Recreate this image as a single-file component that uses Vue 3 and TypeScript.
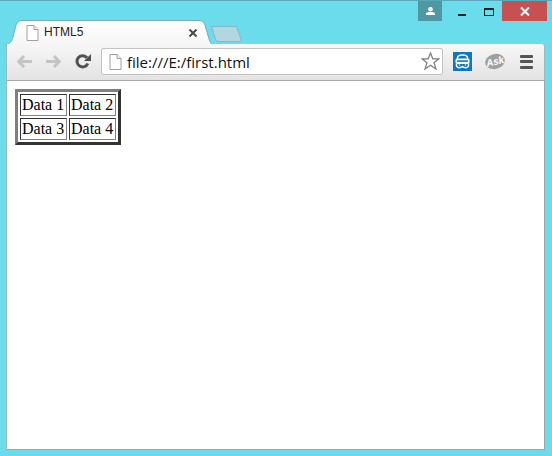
<script setup lang="ts">
const rows: string[][] = [
  ['Data 1', 'Data 2'],
  ['Data 3', 'Data 4'],
]
</script>

<template>
  <div class="window">
    <header class="titlebar">
      <div class="tabstrip">
        <div class="tab">
          <svg class="tab-shape" width="208" height="25" viewBox="0 0 208 25">
            <defs>
              <linearGradient id="tabfill" x1="0" y1="0" x2="0" y2="1">
                <stop offset="0" stop-color="#ffffff" />
                <stop offset="1" stop-color="#f6f6f6" />
              </linearGradient>
            </defs>
            <path d="M0 25 C5 24 7 21 8 17 L11 5 C12 2 14 .5 17 .5 L194 .5 C197 .5 199 2 200 5 L204 19 C205 22 206 24 208 25" fill="url(#tabfill)" stroke="#7fa9b3" stroke-width="1" />
          </svg>
          <svg class="page-icon" width="13" height="16" viewBox="0 0 13 16">
            <path d="M1 .5H8L12 4.500V15.500H1Z" fill="#fff" stroke="#a0a0a0" />
            <path d="M8 .5V4.500H12" fill="#eee" stroke="#a0a0a0" />
          </svg>
          <span class="tab-title">HTML5</span>
          <svg class="tab-close" width="8" height="8" viewBox="0 0 8 8">
            <path d="M.5 .5L7.500 7.500M7.500 .5L.5 7.500" stroke="#4a4a4a" stroke-width="2" />
          </svg>
        </div>
        <svg class="new-tab" width="31" height="16" viewBox="0 0 31 16">
          <path d="M.5 .5H24C25 .5 25.500 1 26 2L30 13C30.500 14.500 29.500 15.500 28 15.500H7C5.500 15.500 5 14.500 4.500 13Z" fill="#b4d6e0" stroke="#86b6c4" />
        </svg>
      </div>
      <div class="controls">
        <div class="profile">
          <svg width="9" height="8" viewBox="0 0 9 8">
            <circle cx="4.500" cy="2.300" r="2.300" fill="#fff" />
            <path d="M0 8V6.500C0 5.500 2 5 4.500 5S9 5.500 9 6.500V8Z" fill="#fff" />
          </svg>
        </div>
        <div class="ctl ctl-min"><span class="min"></span></div>
        <div class="ctl ctl-max"><span class="max"></span></div>
        <div class="close">
          <svg width="10" height="9" viewBox="0 0 10 9">
            <path d="M1 .5L9 8.500M9 .5L1 8.500" stroke="#fff" stroke-width="2" />
          </svg>
        </div>
      </div>
    </header>

    <nav class="toolbar">
      <svg class="nav" width="15" height="13" viewBox="0 0 15 13">
        <path d="M7 1L1.800 6.500L7 12M2 6.500H15" fill="none" stroke="#c4c4c4" stroke-width="3" />
      </svg>
      <svg class="nav nav-fwd" width="15" height="13" viewBox="0 0 15 13">
        <path d="M8 1L13.200 6.500L8 12M13 6.500H0" fill="none" stroke="#c4c4c4" stroke-width="3" />
      </svg>
      <svg class="reload" width="16" height="15" viewBox="0 0 16 15">
        <path d="M12.800 9.500A5.600 5.600 0 1 1 12 3.800" fill="none" stroke="#505050" stroke-width="3" />
        <path d="M9 7H16V0Z" fill="#505050" />
      </svg>
      <div class="omnibox">
        <svg class="omni-page" width="13" height="16" viewBox="0 0 13 16">
          <path d="M1 .5H8L12 4.500V15.500H1Z" fill="#fff" stroke="#a0a0a0" />
          <path d="M8 .5V4.500H12" fill="#eee" stroke="#a0a0a0" />
        </svg>
        <span class="url">file:///E:/first.html</span>
        <svg class="star" width="19" height="18" viewBox="0 0 19 18">
          <path d="M9.500 1L11.800 6.800H18L13 10.700L15 17L9.500 13.300L4 17L6 10.700L1 6.800H7.200Z" fill="#fff" stroke="#7d7d7d" stroke-width="1.200" />
        </svg>
      </div>
      <svg class="ext" width="19" height="19" viewBox="0 0 19 19">
        <rect width="19" height="19" fill="#0f76c4" />
        <path d="M4.500 7V6C4.500 3.800 6 3 9.500 3S14.500 3.800 14.500 6V7" fill="none" stroke="#fff" stroke-width="1.500" />
        <rect x="2.500" y="6.500" width="14" height="5.500" rx="1.500" fill="#fff" />
        <rect x="4" y="8.300" width="11" height="1.600" fill="#0f76c4" />
        <path d="M3.500 12V14C4.500 16 7 16.500 9.500 14.500C12 16.500 14.500 16 15.500 14V12" fill="none" stroke="#fff" stroke-width="1.500" />
        <path d="M6.500 12.500V13.500M12.500 12.500V13.500" stroke="#fff" stroke-width="1.500" />
      </svg>
      <div class="ask"><span>Ask</span></div>
      <div class="menu"><span></span><span></span><span></span></div>
    </nav>

    <main class="page">
      <table class="data">
        <tbody>
          <tr v-for="(row, r) in rows" :key="r">
            <td v-for="cell in row" :key="cell">{{ cell }}</td>
          </tr>
        </tbody>
      </table>
    </main>
  </div>
</template>

<style>
html, body { margin: 0; padding: 0; overflow: hidden; }
</style>

<style scoped>
.window {
  width: 552px;
  height: 456px;
  box-sizing: border-box;
  background: #6bdcec;
  border-top: 1px solid #5aa9b8;
  padding: 0 7px 6px 6px;
  display: flex;
  flex-direction: column;
}
.titlebar {
  height: 43px;
  flex: none;
  position: relative;
  display: flex;
  justify-content: space-between;
}
.tabstrip {
  display: flex;
  align-items: flex-end;
}
.tab {
  position: relative;
  width: 208px;
  height: 24px;
  margin-left: -1px;
  display: flex;
  align-items: center;
  font: 12px "Liberation Sans", sans-serif;
  color: #222;
}
.tab-shape { position: absolute; left: 0; top: 0; overflow: visible; }
.page-icon { position: relative; margin-left: 21px; margin-top: 1px; }
.tab-title { position: relative; margin-left: 5px; }
.tab-close { position: relative; margin-left: auto; margin-right: 16px; margin-top: 1px; }
.new-tab { margin-left: -2px; margin-bottom: 2px; }
.controls {
  position: absolute;
  right: -2px;
  top: 0;
  display: flex;
}
.profile {
  width: 24px;
  height: 20px;
  margin-right: 6px;
  background: #4f97a3;
  display: flex;
  align-items: center;
  justify-content: center;
}
.profile svg { margin-top: -1px; }
.ctl {
  height: 20px;
  display: flex;
  align-items: center;
  justify-content: center;
}
.ctl-min { width: 28px; }
.ctl-max { width: 26px; }
.min { width: 8px; height: 2px; background: #222; margin-top: 8px; }
.max { width: 8px; height: 5px; border: 1px solid #222; border-top-width: 2px; margin-top: 2px; }
.close {
  width: 45px;
  height: 20px;
  background: #c75050;
  display: flex;
  align-items: center;
  justify-content: center;
}
.toolbar {
  height: 37px;
  flex: none;
  box-sizing: border-box;
  display: flex;
  align-items: center;
  padding: 0 0 1px 10px;
  background: linear-gradient(#f7f7f7, #e3e3e3);
  border-bottom: 1px solid #a9a9a9;
  border-right: 1px solid #9fb8bd;
  border-left: 1px solid #9fb8bd;
  border-radius: 0 3px 0 0;
  position: relative;
  z-index: 1;
}
.nav { margin-right: 14px; flex: none; }
.nav-fwd { margin-right: 14px; }
.reload { flex: none; }
.omnibox {
  margin-left: 10px;
  width: 342px;
  height: 27px;
  flex: none;
  box-sizing: border-box;
  background: #fff;
  border: 1px solid #c3c3c3;
  border-radius: 2px;
  display: flex;
  align-items: center;
  padding-left: 7px;
  position: relative;
}
.url {
  margin-left: 5px;
  font: 15px "Open Sans", "Liberation Sans", sans-serif;
  color: #111;
}
.star { position: absolute; right: 2px; top: 3px; }
.ext { margin-left: 10px; flex: none; }
.ask {
  margin-left: 13px;
  width: 20px;
  height: 15px;
  border-radius: 50%;
  background: #a0a0a0;
  transform: rotate(-14deg);
  display: flex;
  align-items: center;
  justify-content: center;
  flex: none;
}
.ask span {
  color: #fff;
  font: italic bold 10px "Liberation Sans", sans-serif;
}
.menu {
  margin-left: 15px;
  width: 13px;
  display: flex;
  flex-direction: column;
  gap: 2.500px;
  flex: none;
}
.menu span { height: 3px; background: #555; border-radius: 1px; display: block; }
.page {
  flex: 1;
  background: #fff;
  padding: 8px;
  border-right: 1px solid #9aa7ab;
  border-bottom: 1px solid #9aa7ab;
  border-left: 1px solid #9fb8bd;
  font: 16px "Liberation Serif", serif;
  color: #000;
}
.data {
  border: 3px solid;
  border-color: #808080 #333 #333 #808080;
  border-spacing: 2px;
  border-collapse: separate;
}
.data td {
  border: 1px solid;
  border-color: #333 #808080 #808080 #333;
  padding: 1px;
  width: 43px;
}
</style>
